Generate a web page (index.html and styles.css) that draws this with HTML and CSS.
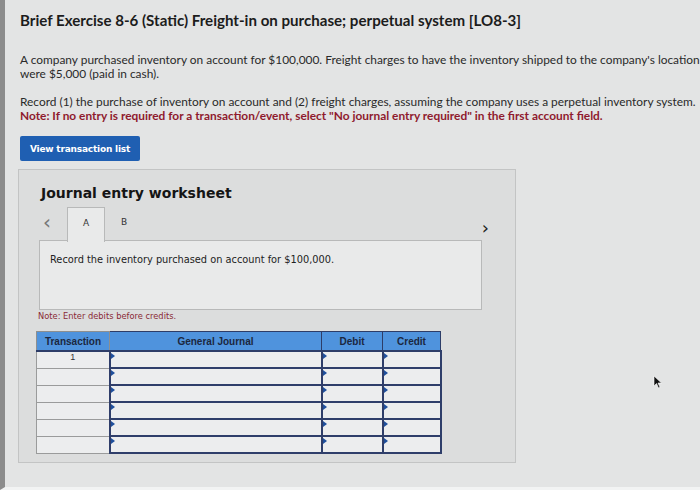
FILE: index.html
```html
<!DOCTYPE html>
<html>
<head>
<meta charset="utf-8">
<link rel="stylesheet" href="styles.css">
</head>
<body>
<div class="page">
  <h1 class="title">Brief Exercise 8-6 (Static) Freight-in on purchase; perpetual system [LO8-3]</h1>
  <p class="intro">A company purchased inventory on account for $100,000. Freight charges to have the inventory shipped to the company's location<br>were $5,000 (paid in cash).</p>
  <p class="task">Record (1) the purchase of inventory on account and (2) freight charges, assuming the company uses a perpetual inventory system.<br><strong class="note">Note: If no entry is required for a transaction/event, select "No journal entry required" in the first account field.</strong></p>
  <button class="btn">View transaction list</button>
  <section class="worksheet">
    <h2 class="ws-title">Journal entry worksheet</h2>
    <div class="tabs-row">
      <span class="arrow prev">&lsaquo;</span>
      <div class="tab active">A</div>
      <div class="tab">B</div>
      <span class="arrow next">&rsaquo;</span>
    </div>
    <div class="prompt">Record the inventory purchased on account for $100,000.</div>
    <p class="hint">Note: Enter debits before credits.</p>
    <table class="journal">
      <thead>
        <tr><th class="c-tr">Transaction</th><th class="c-gj">General Journal</th><th class="c-dr">Debit</th><th class="c-cr">Credit</th></tr>
      </thead>
      <tbody>
        <tr><td class="tr">1</td><td class="in"></td><td class="in"></td><td class="in"></td></tr>
        <tr><td class="tr"></td><td class="in"></td><td class="in"></td><td class="in"></td></tr>
        <tr><td class="tr"></td><td class="in"></td><td class="in"></td><td class="in"></td></tr>
        <tr><td class="tr"></td><td class="in"></td><td class="in"></td><td class="in"></td></tr>
        <tr><td class="tr"></td><td class="in"></td><td class="in"></td><td class="in"></td></tr>
        <tr><td class="tr"></td><td class="in"></td><td class="in"></td><td class="in"></td></tr>
      </tbody>
    </table>
  </section>
</div>
<svg class="cursor" width="10" height="14" viewBox="0 0 10 14"><path d="M1 1 L1 11 L3.5 8.5 L5.5 13 L7 12.3 L5 8 L8.5 8 Z" fill="#111" stroke="#fff" stroke-width="0.6"/></svg>
</body>
</html>
```
FILE: styles.css
```css
html, body {
  margin: 0;
  padding: 0;
}
body {
  width: 700px;
  height: 490px;
  overflow: hidden;
  background: #e3e4e4;
  border-left: 5px solid #8c8c8c;
  border-bottom: 3px solid #f2f3f3;
  box-sizing: border-box;
  position: relative;
  color: #1f1f1f;
}
.page {
  padding: 11px 0 0 15px;
}
.title {
  margin: 0;
  font-family: Lato, "Liberation Sans", sans-serif;
  font-weight: 700;
  font-size: 15.1px;
  line-height: 18px;
  white-space: nowrap;
  color: #1c1c1c;
}
.intro, .task {
  font-family: Lato, "Liberation Sans", sans-serif;
  font-size: 11.9px;
  line-height: 14px;
  white-space: nowrap;
  margin: 0;
  color: #2a2a2a;
}
.intro {
  margin-top: 24px;
}
.task {
  margin-top: 14px;
}
.note {
  color: #8f1a2e;
  font-weight: 700;
}
.btn {
  display: block;
  margin-top: 13px;
  width: 120px;
  height: 25px;
  border: none;
  border-radius: 2px;
  background: #1f5fb2;
  color: #fff;
  font-family: "DejaVu Sans", "Liberation Sans", sans-serif;
  font-weight: 700;
  font-size: 9px;
  letter-spacing: -0.2px;
  padding: 0;
}
.worksheet {
  margin-top: 8px;
  margin-left: -2px;
  width: 498px;
  height: 294px;
  box-sizing: border-box;
  background: #dcdddd;
  border: 1px solid #c3c4c4;
  padding: 13px 0 0 20px;
}
.ws-title {
  margin: 0 0 0 2px;
  font-family: "DejaVu Sans", sans-serif;
  font-weight: 700;
  font-size: 14px;
  line-height: 20px;
  color: #151515;
}
.tabs-row {
  display: flex;
  align-items: stretch;
  margin-top: 4px;
  width: 450px;
  height: 34px;
  position: relative;
}
.arrow {
  font-family: "DejaVu Sans", sans-serif;
  font-size: 20px;
  color: #777;
  line-height: 30px;
}
.prev {
  width: 28px;
  padding-left: 4px;
  box-sizing: border-box;
}
.next {
  margin-left: auto;
  color: #222;
  font-size: 18px;
  line-height: 42px;
}
.tab {
  width: 38px;
  font-family: "DejaVu Sans", sans-serif;
  font-size: 9px;
  line-height: 30px;
  text-align: center;
  color: #333;
  box-sizing: border-box;
}
.tab.active {
  background: #e9eaea;
  border: 1px solid #b8b9b9;
  border-bottom: none;
  position: relative;
  z-index: 1;
  height: 35px;
}
.prompt {
  width: 443px;
  height: 70px;
  box-sizing: border-box;
  margin-top: -1px;
  background: #e9eaea;
  border: 1px solid #b8b9b9;
  padding: 13px 0 0 10px;
  font-family: "DejaVu Sans", sans-serif;
  font-size: 9.8px;
  color: #222;
}
.hint {
  margin: 0 0 0 -1px;
  font-family: "DejaVu Sans", sans-serif;
  font-size: 8.3px;
  line-height: 9px;
  padding-top: 2px;
  color: #8a2a35;
}
.journal {
  margin-top: 10px;
  margin-left: -3px;
  border-collapse: collapse;
  font-family: "Liberation Sans", Arial, sans-serif;
}
.journal th {
  background: #4f93dd;
  height: 18px;
  padding: 0;
  font-size: 10px;
  font-weight: 700;
  color: #1b2740;
  border: 1px solid #2d3d68;
  border-bottom: 2px solid #2d3d68;
}
.journal th.c-tr {
  border-color: #8e8f8f;
  border-bottom-color: #2d3d68;
}
.c-tr { width: 72px; }
.c-gj { width: 211px; }
.c-dr { width: 60px; }
.c-cr { width: 57px; }
.journal td {
  height: 15px;
  padding: 0;
  background: #ecedee;
}
.journal td.tr {
  border: 1px solid #9a9b9b;
  text-align: center;
  font-size: 9px;
  color: #333;
  vertical-align: top;
  line-height: 11px;
}
.journal td.in {
  border: 2px solid #2f3e6a;
  position: relative;
}
.journal td.in::before {
  content: "";
  position: absolute;
  left: 0;
  top: 1px;
  border-top: 3px solid transparent;
  border-bottom: 3px solid transparent;
  border-left: 4px solid #1f4f9c;
}
.cursor {
  position: absolute;
  left: 648px;
  top: 375px;
}
```
